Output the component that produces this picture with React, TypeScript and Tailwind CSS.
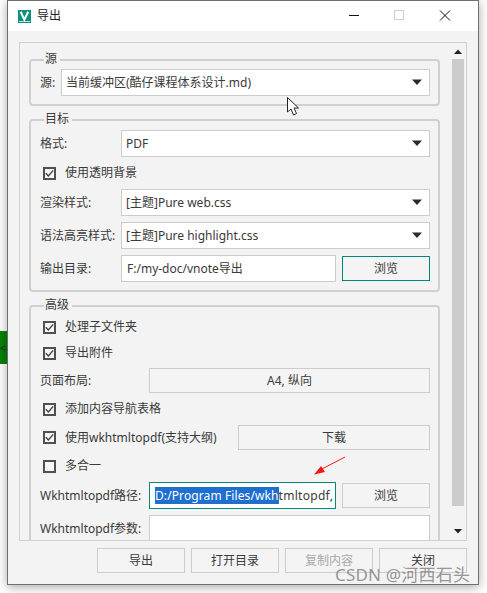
import React from "react";

const Caret = () => (
  <svg width="10" height="7" viewBox="0 0 10 7" className="shrink-0"><path d="M0 0.5h10L5 6z" fill="#2b2b2b" /></svg>
);

const Combo = ({ text, className = "" }: { text: React.ReactNode; className?: string }) => (
  <div className={`h-[27px] flex items-center bg-white border border-[#cccccc] pl-[4px] pr-[7px] justify-between ${className}`}>
    <span>{text}</span>
    <Caret />
  </div>
);

const Check = ({ label, checked = true, className = "" }: { label: string; checked?: boolean; className?: string }) => (
  <div className={`flex items-center ${className}`}>
    <div className="w-[13px] h-[13px] ml-[3px] mr-[9px] border-2 border-[#505050] flex items-center justify-center shrink-0 bg-[#f6f6f6]">
      {checked && (
        <svg width="9" height="9" viewBox="0 0 9 9"><path d="M0.8 4.2L3.4 7L8.2 1.4" fill="none" stroke="#444444" strokeWidth="1.4" /></svg>
      )}
    </div>
    <span>{label}</span>
  </div>
);

const Btn = ({ text, className = "" }: { text: string; className?: string }) => (
  <div className={`h-[25px] flex items-center justify-center border border-[#cccccc] bg-[#f4f4f4] ${className}`}>{text}</div>
);

const Group = ({ title, className = "", children }: { title: string; className?: string; children: React.ReactNode }) => (
  <div className={`relative w-[411px] border-2 border-[#d0d0d0] rounded-[4px] pl-[9px] pr-[8px] ${className}`}>
    <span className="absolute left-[13px] top-[-10px] bg-[#f3f3f3] px-[1px] pr-[3px] leading-[16px]">{title}</span>
    {children}
  </div>
);

export default function App() {
  return (
    <div
      className="relative w-[487px] h-[593px] bg-white overflow-hidden pl-[7px] text-[12px] text-[#3a3a3a]"
      style={{ fontFamily: '"Noto Sans","Noto Sans CJK SC",sans-serif' }}
    >
      <div className="absolute left-0 top-[331px] w-[7px] h-[33px] bg-[#078207] flex items-center text-[10px] leading-none text-[#0a2a0a] overflow-hidden">
        <span className="mt-[0px]">&lt;-</span>
      </div>
      <div className="w-[472px] h-[585px] border border-[#6f6f6f] bg-[#f3f3f3] flex flex-col shadow-[0_2px_10px_rgba(0,0,0,0.35)] relative">
        {/* title bar */}
        <div className="h-[30px] bg-white flex items-center shrink-0 relative">
          <svg width="13" height="13" viewBox="0 0 13 13" className="ml-[10px] mr-[6px]">
            <rect width="13" height="13" fill="#0f8f82" />
            <rect x="1" y="11" width="11" height="1" fill="#bfe3df" />
            <path d="M2.6 1.8L6.4 9.6L10.2 1.8" fill="none" stroke="#ffffff" strokeWidth="2" />
          </svg>
          <span className="text-[#222222]">导出</span>
          <svg width="112" height="12" viewBox="0 0 112 12" className="ml-auto mr-[17px]">
            <path d="M0 5.5h10" stroke="#111111" strokeWidth="1" />
            <rect x="45.5" y="0.5" width="9" height="9" fill="none" stroke="#cfcfcf" />
            <path d="M91 0.5l10 10M101 0.5l-10 10" stroke="#111111" strokeWidth="1" fill="none" />
          </svg>
        </div>

        {/* scroll frame */}
        <div className="ml-[11px] mt-[11px] w-[448px] h-[499px] border border-[#d0d0d0] flex overflow-hidden shrink-0">
          <div className="ml-[9px] w-[411px] shrink-0">
            <Group title="源" className="mt-[16px] h-[47px] pt-[8px]">
              <div className="flex items-center">
                <span className="w-[21px] shrink-0">源:</span>
                <Combo text="当前缓冲区(酷仔课程体系设计.md)" className="flex-1" />
              </div>
            </Group>

            <Group title="目标" className="mt-[13px] pt-[9px] pb-[8px]">
              <div className="flex items-center">
                <span className="w-[81px] shrink-0">格式:</span>
                <Combo text="PDF" className="flex-1" />
              </div>
              <Check label="使用透明背景" className="h-[32px]" />
              <div className="flex items-center">
                <span className="w-[81px] shrink-0">渲染样式:</span>
                <Combo text="[主题]Pure web.css" className="flex-1" />
              </div>
              <div className="flex items-center mt-[6px]">
                <span className="w-[81px] shrink-0">语法高亮样式:</span>
                <Combo text="[主题]Pure highlight.css" className="flex-1" />
              </div>
              <div className="flex items-center mt-[6px]">
                <span className="w-[81px] shrink-0">输出目录:</span>
                <div className="w-[215px] h-[27px] bg-white border border-[#cccccc] flex items-center pl-[5px]">F:/my-doc/vnote导出</div>
                <Btn text="浏览" className="ml-[6px] flex-1 !border-[#00897b]" />
              </div>
            </Group>

            <Group title="高级" className="mt-[13px] pt-[7px] h-[260px]">
              <Check label="处理子文件夹" className="h-[26px]" />
              <Check label="导出附件" className="h-[26px]" />
              <div className="flex items-center mt-[2px]">
                <span className="w-[109px] shrink-0">页面布局:</span>
                <Btn text="A4, 纵向" className="flex-1" />
              </div>
              <Check label="添加内容导航表格" className="h-[26px] mt-[3px]" />
              <div className="flex items-center mt-[3px]">
                <Check label="使用wkhtmltopdf(支持大纲)" className="w-[198px] shrink-0" />
                <Btn text="下载" className="flex-1" />
              </div>
              <Check label="多合一" checked={false} className="h-[26px] mt-[3px]" />
              <div className="flex items-center mt-[3px]">
                <span className="w-[109px] shrink-0">Wkhtmltopdf路径:</span>
                <div className="w-[187px] h-[27px] bg-white border border-[#00897b] flex items-center pl-[5px] overflow-hidden whitespace-nowrap">
                  <span className="bg-[#1f6fd1] text-white h-[17px] leading-[17px] tracking-[0.1px]">D:/Program Files/wkh</span>
                  <span className="tracking-[0.3px]">tmltopdf,</span>
                </div>
                <Btn text="浏览" className="ml-[6px] flex-1" />
              </div>
              <div className="flex items-center mt-[6px]">
                <span className="w-[109px] shrink-0">Wkhtmltopdf参数:</span>
                <div className="flex-1 h-[27px] bg-white border border-[#cccccc]" />
              </div>
            </Group>
          </div>

          {/* scrollbar */}
          <div className="ml-[12px] w-[12px] shrink-0 flex flex-col items-center">
            <svg width="8" height="5" viewBox="0 0 8 5" className="mt-[6px]"><path d="M0 5L4 0.5L8 5z" fill="#222222" /></svg>
            <div className="w-[12px] h-[447px] bg-[#cccccc] mt-[5px]" />
            <svg width="8" height="5" viewBox="0 0 8 5" className="mt-[23px]"><path d="M0 0L4 4.5L8 0z" fill="#222222" /></svg>
          </div>
        </div>

        {/* bottom buttons */}
        <div className="ml-[89px] mt-[7px] flex gap-[6px] shrink-0">
          <Btn text="导出" className="w-[88px]" />
          <Btn text="打开目录" className="w-[88px]" />
          <Btn text="复制内容" className="w-[88px] text-[#a8a8a8]" />
          <Btn text="关闭" className="w-[88px]" />
        </div>
      </div>

      {/* annotation arrow */}
      <svg width="40" height="24" viewBox="0 0 40 24" className="absolute left-[312px] top-[455px]">
        <path d="M33 2L8 15" stroke="#f01818" strokeWidth="1" fill="none" />
        <path d="M2 19.5L9 11L13 17z" fill="#f01818" />
      </svg>

      {/* mouse pointer */}
      <svg width="14" height="20" viewBox="0 0 14 20" className="absolute left-[286px] top-[97px]">
        <path d="M1.5 0.5V15L5 12L7.5 18L10.5 16.5L8 11H12.5z" fill="#ffffff" stroke="#222222" strokeWidth="1" />
      </svg>

      {/* watermark */}
      <div className="absolute left-[335px] top-[563px] text-[17px] leading-[24px] tracking-[0.2px] text-[#7c7c7c]/80 whitespace-nowrap">CSDN @河西石头</div>
    </div>
  );
}
